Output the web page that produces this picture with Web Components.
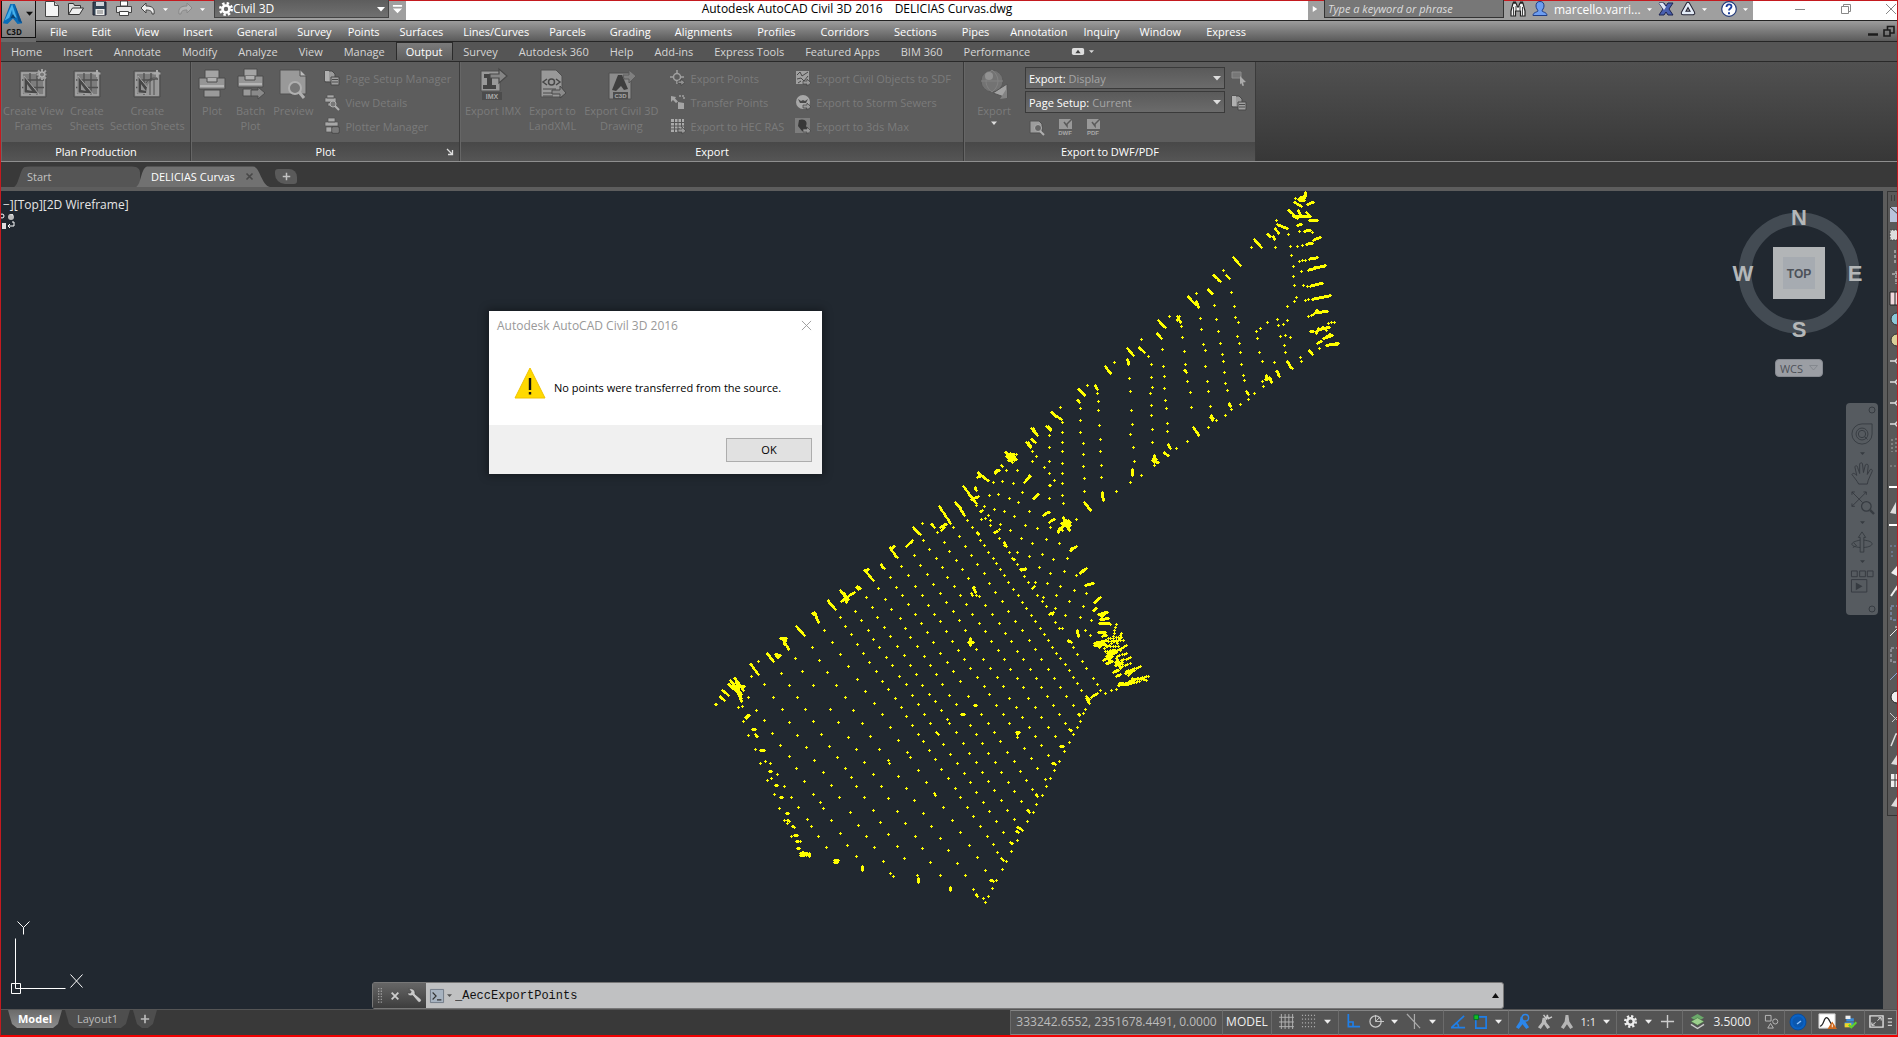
<!DOCTYPE html>
<html lang="en">
<head>
<meta charset="utf-8">
<title>Autodesk AutoCAD Civil 3D 2016</title>
<style>
html,body{margin:0;height:100%}
body{font:11px/15px "Open Sans","Noto Sans",sans-serif;background:#393939;overflow:hidden}
</style>
</head>
<body>
<cad-app></cad-app>
<script>
/* ---------- icon set: [viewBox, markup] ---------- */
const T = (x, y, s, t) => `<text x="${x}" y="${y}" font-family="Liberation Sans,sans-serif" font-weight="700" font-size="${s}" text-anchor="middle" fill="#a8a8a8">${t}</text>`;
const I = {
caret:['0 0 8 8','<path d="M0 2h8L4 6.500z" fill="currentColor"/>'],
logo:['0 0 24 24','<path d="M9 1h5l8 21-5 1-5-6-6 6-5-1z" fill="#0a6cb8"/><path d="M11 1L3 19l5-3 3-9 1 8 4 1z" fill="#45b1ec"/><path d="M9 17l3-5 3 5-3-1z" fill="#08406f"/><path d="M14 2l8 20-4-2z" fill="#0b4f8c"/>'],
new:['0 0 16 16','<path d="M1.500.500h9l4 4v11h-13z" fill="#f4f4f4" stroke="#444"/><path d="M10.500.500v4h4" fill="#ccc" stroke="#444"/>'],
open:['0 0 16 16','<path d="M.500 13.500v-11h5l1 2h6v3" fill="#ddd" stroke="#333"/><path d="M.500 13.500l4-6.500h11l-4 6.500z" fill="#f0f0f0" stroke="#333"/>'],
save:['0 0 16 16','<path d="M1 1h13v13H1z" fill="#345" stroke="#223"/><path d="M4 1h8v4H4z" fill="#cfd4da"/><path d="M3.500 8h9v6h-9z" fill="#eee"/><path d="M5 10h6M5 12h6" stroke="#777"/>'],
print:['0 0 16 16','<path d="M4.500 0h7v5h-7z" fill="#fff" stroke="#444"/><path d="M.500 5.500h15v6H.500z" fill="#e8e8e8" stroke="#444"/><path d="M3.500 10.500h9v4h-9z" fill="#fff" stroke="#444"/>'],
undo:['0 0 16 16','<path d="M1 7l5-5v3c6 0 9 2 8 8h-2c0-3-2-4-6-4v3z" fill="#eee" stroke="#444"/>'],
redo:['0 0 16 16','<path d="M15 7l-5-5v3c-6 0-9 2-8 8h2c0-3 2-4 6-4v3z" fill="#b4b4b4" stroke="#888"/>'],
gear:['0 0 16 16','<circle cx="8" cy="8" r="4" fill="none" stroke="currentColor" stroke-width="3"/><circle cx="8" cy="8" r="6.500" fill="none" stroke="currentColor" stroke-width="3" stroke-dasharray="2.700 2.400"/>'],
bars:['0 0 12 12','<path d="M1 1h10v2H1zM1 5h10L6 10z" fill="#fff"/>'],
play:['0 0 8 10','<path d="M1 1l6 4-6 4z" fill="#fff"/>'],
binoc:['0 0 16 16','<path d="M1 15v-5l2-8h3l1.500 4h1L10 2h3l2 8v5h-4.500v-5h-5v5z" fill="#f2f2f2" stroke="#222" stroke-width="1.200"/><path d="M3 1.500h3M10 1.500h3" stroke="#222" stroke-width="2"/><path d="M3.500 6v9M12.500 6v9M6 5v5M10 5v5" stroke="#444"/>'],
user:['0 0 16 16','<path d="M8 .500c3 0 4 2 4 4.500S10 9 10 10s5 1 5 4.500H1C1 11 6 11 6 10S4 7.500 4 5 5 .500 8 .500z" fill="#6d9df0" stroke="#1d3c86"/>'],
exch:['0 0 16 16','<path d="M1 2h5l2 3 2-3h5l-4 6 4 6h-5l-2-3-2 3H1l4-6z" fill="#4a60b0" stroke="#1c2450"/><path d="M1 2h4l3 4-2 3z" fill="#dfe4f2"/>'],
a360:['0 0 16 16','<path d="M8 3l5 9H3z" fill="none" stroke="#223" stroke-width="4.500" stroke-linejoin="round"/><path d="M8 3l5 9H3z" fill="none" stroke="#e4ecf7" stroke-width="2.500" stroke-linejoin="round"/>'],
help:['0 0 16 16','<circle cx="8" cy="8" r="7.300" fill="#fff" stroke="#223a7a" stroke-width="1.200"/><path d="M5.500 6c0-3.500 5-3.500 5-.500 0 2-2.500 2-2.500 4" fill="none" stroke="#1b3fa0" stroke-width="1.800"/><path d="M7 11.300h2v2H7z" fill="#1b3fa0"/>'],
min:['0 0 12 12','<path d="M1 6.500h10" stroke="currentColor"/>'],
rest:['0 0 12 12','<path d="M1.500 3.500h7v7h-7zM3.500 3V1.500h7v7H9" fill="none" stroke="currentColor"/>'],
x:['0 0 12 12','<path d="M1 1l10 10M11 1L1 11" fill="none" stroke="currentColor"/>'],
boldx:['0 0 12 12','<path d="M2 2l8 8M10 2l-8 8" stroke="currentColor" stroke-width="2.200"/>'],
mmin:['0 0 12 12','<path d="M1 9.500h10" stroke="#1c1c1c" stroke-width="2.500"/>'],
mrest:['0 0 12 12','<path d="M1 5h6v6H1zM4.500 5V1.500h6.500V8H7" fill="none" stroke="#1c1c1c" stroke-width="1.600"/>'],
sheet:['0 0 28 30','<path d="M1 2h26v26H1z" fill="#7d7d7d" stroke="#4b4b4b"/><path d="M3 4h22v22H3z" fill="none" stroke="#a8a8a8" stroke-width="1.500"/><path d="M11 4v22M18 4v22M3 11h22M3 18.500h22" stroke="#4f4f4f" stroke-width="1.300"/><path d="M5 7v17l15 1z" fill="#474747" stroke="#a5a5a5"/><path d="M8 15v6l5 1z" fill="#929292"/>'],
burst:['','<g stroke="#a2a2a2" stroke-width="2"><path d="M23 0v11M17.500 5.500h10M19 1.500l8 8M27 1.500l-8 8"/></g><circle cx="23" cy="5.500" r="2.500" fill="#777" stroke="#bbb"/>'],
star:['','<path d="M24 1v7M20.500 4.500h7" stroke="#aaa" stroke-width="2"/>'],
arc:['','<path d="M13 26c0-12 5-16 12-15v15z" fill="#999"/><path d="M13 14c3-5 8-6 12-4M17 12v14M21 10v16" fill="none" stroke="#4f4f4f"/><path d="M24 1v7M20.500 4.500h7" stroke="#aaa" stroke-width="2"/>'],
plot:['0 0 28 30','<path d="M7 1h14v9H7z" fill="#a4a4a4" stroke="#4c4c4c"/><path d="M1 9h26v11H1z" fill="#959595" stroke="#4c4c4c"/><path d="M9 9v4h10V9" fill="#b0b0b0" stroke="#4c4c4c"/><path d="M2 17h24" stroke="#b5b5b5" stroke-width="2"/><path d="M6 21h16v7H6z" fill="#9a9a9a" stroke="#4c4c4c"/>'],
batch:['0 0 28 30','<path d="M7 0h13v8H7z" fill="#a4a4a4" stroke="#4c4c4c"/><path d="M1 7h25v11H1z" fill="#959595" stroke="#4c4c4c"/><path d="M8 7v4h10V7" fill="#b0b0b0" stroke="#4c4c4c"/><path d="M2 15h23" stroke="#b5b5b5" stroke-width="2"/><path d="M6 20h9v7H6z" fill="#9a9a9a" stroke="#4c4c4c"/><path d="M14 21h7v-3l7 6-7 6v-3h-7z" fill="#8a8a8a" stroke="#4c4c4c"/>'],
preview:['0 0 28 30','<path d="M1 1h20l6 6v18H1z" fill="#999" stroke="#505050"/><path d="M21 1v6h6" fill="#bbb" stroke="#505050"/><circle cx="16" cy="19" r="6" fill="#777" stroke="#b0b0b0" stroke-width="2"/><path d="M20 23l5 6" stroke="#b0b0b0" stroke-width="3"/>'],
imx:['0 0 28 30','<path d="M2 2h19v20H2z" fill="#999" stroke="#505050"/><path d="M5 5h11v4h-3v7h4v4H4v-4h4V9H5z" fill="#444"/><path d="M11 5h9V0l8 7-8 7V9h-9z" fill="#858585" stroke="#484848" stroke-width="1.200"/><path d="M3 23h20v8H3z" fill="#4c4c4c"/>' + T(13, 30, 7, 'IMX')],
xml:['0 0 28 30','<path d="M3 1h15l6 6v21H3z" fill="#999" stroke="#505050"/><path d="M9 10l-4 3 4 3M18 10l4 3-4 3" fill="none" stroke="#484848" stroke-width="1.500"/><circle cx="13.500" cy="13" r="3" fill="none" stroke="#484848" stroke-width="1.500"/><path d="M5 20h13M5 24h12M5 27h10" stroke="#484848"/><path d="M14 21h8v-4l6 7-6 5v-4h-8z" fill="#8a8a8a" stroke="#484848"/>'],
c3d:['0 0 28 30','<path d="M2 4h22v26H2z" fill="#8c8c8c" stroke="#505050"/><path d="M11 6h4l6 14-4 1-3-4-5 5-4-1z" fill="#3e3e3e"/><path d="M16 6h6V1l7 6-7 7v-4h-5z" fill="#808080" stroke="#5a5a5a"/><path d="M6 23h15v7H6z" fill="#4c4c4c"/>' + T(13.5, 29, 6, 'C3D')],
globe:['0 0 28 30','<circle cx="12" cy="12" r="11" fill="#737373" stroke="#5a5a5a"/><path d="M12 1c-8 6-8 16 0 22M12 1c8 6 8 16 0 22M1 12h22" fill="none" stroke="#828282"/><circle cx="9" cy="7" r="4" fill="#929292"/><path d="M13 24L27 15v14z" fill="#a2a2a2" stroke="#555"/><path d="M20 30l7-11v10z" fill="#828282"/>'],
page:['0 0 16 16','<path d="M1 1h7l3 3v8H1z" fill="#9a9a9a" stroke="#494949"/><path d="M1 1h4v10H1z" fill="#b0b0b0"/><path d="M7 7h8v8H7z" fill="#a0a0a0" stroke="#494949"/><path d="M8 9.500h6M8 12h6" stroke="#4c4c4c"/>'],
vdet:['0 0 16 16','<path d="M3 1h7v3H3zM1 4h11v4H1zM4 9h5v3H4z" fill="#a8a8a8" stroke="#555" stroke-width=".700"/><circle cx="9" cy="10" r="3" fill="#777" stroke="#b0b0b0"/><path d="M11 12l4 4" stroke="#b0b0b0" stroke-width="2"/>'],
pman:['0 0 16 16','<path d="M4 0h7v4H4zM1 4h13v4H1zM2 9h6v5H2z" fill="#a8a8a8" stroke="#505050" stroke-width=".700"/><path d="M8 9h7v6H8z" fill="#a0a0a0" stroke="#444"/><path d="M9 11h5M9 13h5" stroke="#555"/>'],
xpt:['0 0 16 16','<circle cx="7" cy="7" r="3.500" fill="none" stroke="#a0a0a0" stroke-width="1.500"/><path d="M7 0v4M7 10v4M0 7h4M10 7h4" stroke="#a0a0a0" stroke-width="1.500"/><path d="M8 11h3v-2l4 3.500-4 3v-2H8z" fill="#909090" stroke="#444" stroke-width=".700"/>'],
tpt:['0 0 16 16','<path d="M1 2l5 1-1 1.500 3 3-2 1.500-3-3L1 8zM8 8l6 1v6H8z" fill="#a5a5a5"/><path d="M9 2h5v3" stroke="#a0a0a0" stroke-dasharray="2 1" fill="none" stroke-width="1.500"/>'],
hec:['0 0 16 16','<path d="M1 1h13v13H1z" fill="#aaa"/><path d="M1 4.500h13M1 8h13M1 11h9M4.500 1v13M8 1v13M11.500 1v8" stroke="#555"/><path d="M8 11h4V9l4 4-4 3v-2H8z" fill="#999" stroke="#444" stroke-width=".700"/>'],
sdf:['0 0 16 16','<path d="M1 1h13v13H1z" fill="#a0a0a0"/><path d="M2 5l3-3 2 4 6-4M2 9l4-1 3 3 4-5M3 13l3-2" fill="none" stroke="#484848"/><path d="M8 11h4V9l4 4-4 3v-2H8z" fill="#999" stroke="#444" stroke-width=".700"/>'],
storm:['0 0 16 16','<circle cx="8" cy="8" r="7" fill="#a8a8a8"/><path d="M3 5l3 2 2-1 2 1 3-2-2 4H5z" fill="#484848"/><path d="M8 11h4V9l4 4-4 3v-2H8z" fill="#999" stroke="#444" stroke-width=".700"/>'],
max:['0 0 16 16','<path d="M0 0h15v15H0z" fill="#7d7d7d"/><path d="M4 2c6-2 9 2 7 6l3 5H7L3 8z" fill="#383838"/><path d="M8 11h4V9l4 4-4 3v-2H8z" fill="#999" stroke="#444" stroke-width=".700"/>'],
sel:['0 0 16 16','<path d="M1 2h9v6H1z" fill="#777" stroke="#8d8d8d"/><path d="M9 6l6 6-3 .500 1 3-1.500.500-1.300-3L9 14.500z" fill="#aaa"/>'],
pprev:['0 0 16 16','<path d="M1 2h9l3 3v9H1z" fill="#9c9c9c" stroke="#505050"/><circle cx="9" cy="9" r="3.500" fill="#666" stroke="#b0b0b0"/><path d="M11 12l4 4" stroke="#b0b0b0" stroke-width="2"/>'],
dwf:['0 0 16 16','<path d="M2 0h13v10H2z" fill="#999"/><path d="M7 3l3 4V5l5-5" fill="none" stroke="#5a5a5a" stroke-width="1.500"/>' + T(8, 16, 6, 'DWF')],
pdf:['0 0 16 16','<path d="M2 0h13v10H2z" fill="#999"/><path d="M7 3l3 4V5l5-5" fill="none" stroke="#5a5a5a" stroke-width="1.500"/>' + T(8, 16, 6, 'PDF')],
launch:['0 0 8 8','<path d="M1 1l5 5M6.500 2v4.500H2" fill="none" stroke="#ddd" stroke-width="1.300"/>'],
plus:['0 0 12 12','<path d="M6 1v10M1 6h10" stroke="currentColor" stroke-width="2"/>'],
toggle:['0 0 16 10','<rect x="1" y="1" width="14" height="8" rx="2" fill="#ddd"/><path d="M5 7l3-4 3 4z" fill="#444"/>'],
wrench:['0 0 16 16','<path d="M2 1l2.500 3-1 1.500L.700 5C1 8 3 9 6 8l6 7c2 1 4-1 3-3L8.500 6.500C9 3 7 0 2 1z" fill="#c9c9c9" stroke="#333" stroke-width=".600"/>'],
grip:['0 0 6 20','<path d="M1.500 1v18M4.500 1v18" stroke="#999" stroke-width="1.500" stroke-dasharray="1.500 1.500"/>'],
prompt:['0 0 16 16','<path d="M.500.500h15v15H.500z" fill="#a7b3c0" stroke="#6d7782"/><path d="M3 4l4 4-4 4M8 12.500h5" fill="none" stroke="#333" stroke-width="1.300"/>'],
warn:['0 0 32 32','<path d="M16 1l15 30H1z" fill="#ffd900" stroke="#f0c400"/><path d="M14.800 11h2.400v12h-2.400zM14.800 25h2.400v2.500h-2.400z" fill="#111"/>'],
grid:['0 0 16 16','<path d="M2.500 0v16M6.500 0v16M10.500 0v16M14.500 0v16M0 3.500h16M0 8.500h16M0 13.500h16" stroke="#ccc" opacity=".8"/>'],
dots:['0 0 16 16','<path d="M1 1.500h15M1 5.500h15M1 9.500h15M1 13.500h15" stroke="#aaa" stroke-width="1.200" stroke-dasharray="1.200 2"/>'],
ortho:['0 0 16 16','<path d="M2.500 0v13.500H15M2.500 8.500h5v5" fill="none" stroke="#1f7fe8" stroke-width="1.800"/>'],
polar:['0 0 16 16','<circle cx="7" cy="8" r="6" fill="none" stroke="#ccc" stroke-width="1.300"/><path d="M7 1v7h9M7 8l5-5" fill="none" stroke="#ccc"/>'],
iso:['0 0 16 16','<path d="M1 0l14 15M9 0v16" stroke="#aaa" stroke-width="1.300"/>'],
otrack:['0 0 16 16','<path d="M0 14.500h15M1 14L14 2M8 14c0-3-1-4-3-4" fill="none" stroke="#1f7fe8" stroke-width="1.800"/>'],
osnap:['0 0 16 16','<path d="M3 3h11v12H3z" fill="none" stroke="#1f7fe8" stroke-width="1.800"/><path d="M1 1h5v5H1z" fill="#13c01d" stroke="#063"/>'],
anno1:['0 0 16 16','<path d="M6 3h4l1 5 4 6-3 2-4-5-4 5-3-2 4-6z" fill="#2b86ea"/><circle cx="11" cy="4" r="3.500" fill="#545454" stroke="#2b86ea" stroke-width="1.500"/>'],
anno2:['0 0 16 16','<path d="M6 4h3l1 5 4 5-3 2-3.500-5L4 16l-3-2 4-5z" fill="#bbb"/><path d="M7 1l3 4 1-4 1 4 4-2" stroke="#ccc" fill="none" stroke-width="1.500"/>'],
anno3:['0 0 16 16','<path d="M7 1h3l1 7 4 6-3 2-3.500-5L5 16l-3-2 4-6z" fill="#b5b5b5"/>'],
cplus:['0 0 16 16','<path d="M8 1v14M1 8h14" stroke="#ccc" stroke-width="1.500"/>'],
layers:['0 0 16 16','<path d="M8 0l7 4-7 4-7-4z" fill="#6aa86a"/><path d="M8 4l7 4-7 4-7-4z" fill="#9ccf8c" stroke="#3f6b3c" stroke-width=".600"/><path d="M1 11l7 4.500 7-4.500" fill="none" stroke="#ccc" stroke-width="1.500"/>'],
shapes:['0 0 16 16','<path d="M1.500 1.500h6v6h-6z" fill="none" stroke="#bbb"/><circle cx="12" cy="8" r="2.700" fill="none" stroke="#bbb"/><path d="M7 10l3 5H4z" fill="none" stroke="#bbb"/>'],
perf:['0 0 18 18','<circle cx="9" cy="9" r="8" fill="#0b62c4" stroke="#0a4d9b"/><circle cx="9" cy="9" r="5.500" fill="#0b57ae"/><path d="M8 11l4-3" stroke="#8cc3ff" stroke-width="1.500"/>'],
curve:['0 0 20 18','<path d="M1 1h17v15H1z" fill="#fff" stroke="#ccc"/><path d="M2 14c4 0 4-9 7-9s3 6 7 9" fill="none" stroke="#222" stroke-width="1.300"/><path d="M15 9l5 8H10z" fill="#d26a1d"/><path d="M14.500 12h1v3h-1z" fill="#fff"/>'],
tray:['0 0 16 18','<path d="M3 5h9v4H3zM1 10h11v5H1z" fill="#3c8bd6"/><path d="M1 11h8v5H1z" fill="#f0d52a"/><path d="M2 2h6v4H2z" fill="#eee"/><path d="M6 13l3 3 6-6" fill="none" stroke="#5fd22a" stroke-width="2.500"/>'],
clean:['0 0 16 14','<path d="M1 1h14v12H1z" fill="none" stroke="#ddd" stroke-width="1.500"/><path d="M9 6l4-3.500M10 3h3v3M7 8l-4 3M3 8v3h3" stroke="#ddd" fill="none"/>'],
menu3:['0 0 6 12','<path d="M1 2h5M1 6h5M1 10h5" stroke="#ccc" stroke-width="1.500"/>'],
wheel:['0 0 24 24','<path d="M12 1h11v11a11 11 0 1 1-11-11z" fill="none" stroke="currentColor"/><circle cx="12" cy="12" r="6.500" fill="none" stroke="currentColor"/><circle cx="12" cy="12" r="4" fill="none" stroke="currentColor"/><path d="M15 15l3 3" stroke="currentColor"/>'],
hand:['0 0 24 24','<path d="M8 23C6 19 3 16 1 13c1-2 3-1 5 1L4 5c1-2 3-1 3 1l2 6V2c1-2 3-1 3 0l1 9 2-8c1-1 3-1 3 1l-1 9 3-5c1-1 3 0 2 2l-4 9-1 4z" fill="none" stroke="currentColor"/>'],
zoom:['0 0 24 24','<circle cx="16" cy="16" r="5" fill="none" stroke="currentColor" stroke-width="1.300"/><path d="M20 20l4 4" stroke="currentColor" stroke-width="2.500"/><path d="M1 1l11 11M16 1L1 16M1 4V1h3M13 1h3v3M1 13v3h3" stroke="currentColor" fill="none"/>'],
orbit:['0 0 24 24','<path d="M10 23V7H8l4-6 4 6h-2v16z" fill="none" stroke="currentColor"/><path d="M10 10c-12 2-12 7 0 8M14 10c12 1 12 7 0 8M3 13l3 3-4 2" fill="none" stroke="currentColor"/>'],
motion:['0 0 24 24','<path d="M.500 1h6v6h-6zM9 1h6v6H9zM17 1h6v6h-6zM.500 10h16v13H.500z" fill="none" stroke="currentColor"/><path d="M5 13l7 4-7 4z" fill="currentColor"/>'],
};
const ico = (n, w = 16, h = w, cls = '') =>
  `<svg class="i ${cls}" width="${w}" height="${h}" viewBox="${I[n][0]}" aria-hidden="true">${I[n][1]}</svg>`;
const BASE = `:host,*{box-sizing:border-box}button,input,select{font:inherit;color:inherit;background:none;border:0;padding:0;margin:0;outline:0}
button{display:flex;align-items:center;justify-content:center;white-space:nowrap}.i{display:block;flex:none;overflow:visible}`;
const define = (name, css, html) => customElements.define(name, class extends HTMLElement {
  connectedCallback() {
    if (this.shadowRoot) return;
    this.attachShadow({mode: 'open'}).innerHTML = `<style>${BASE}${css}</style>` + (typeof html === 'function' ? html(this) : html);
  }
});

/* ---------- title bar ---------- */
const qbtn = (n, label, w = 16) => `<button aria-label="${label}">${ico(n, w)}</button>`;
define('title-bar', `
:host{display:flex;height:20px;background:#fff;border-bottom:1px solid #222}
.q,.r{display:flex;align-items:center;background:#9f9f9f;color:#fff;flex:none;padding-bottom:3px}
.q{padding-left:8px;gap:8px;width:370px}.q .c{margin:0 1px 0 -1px}
.ws{display:flex;align-items:center;flex:1;height:18px;background:linear-gradient(#5d5d5d,#707070);border:1px solid #444;border-top:0;padding:0 3px 0 4px;font-size:12px;margin-right:-5px}
.ws select{flex:1;appearance:none}
.t{flex:1;display:flex;justify-content:center;gap:12px;align-items:center;color:#000;font-size:12px;padding-bottom:4px}
.r{width:445px;gap:6px;padding-left:4px}.r .z{margin-left:8px}
.r input{width:180px;height:18px;background:#777;border:1px solid #333;border-top:0;padding:0 3px;font-style:italic}
.r input::placeholder{color:#ddd}.w{flex:none;display:flex;width:144px;color:#888;align-items:center;justify-content:space-between;padding:0 0 4px 41px}
`, `<div class="q">${qbtn('new','New')}${qbtn('open','Open')}${qbtn('save','Save')}${qbtn('print','Plot')}${qbtn('undo','Undo')}
<button class="c" aria-label="Undo list">${ico('caret',5)}</button>${qbtn('redo','Redo')}<button class="c" aria-label="Redo list">${ico('caret',5)}</button>
<label class="ws">${ico('gear',14)}<select aria-label="Workspace"><option>Civil 3D</option></select>${ico('caret',8)}</label><button aria-label="Customize" style="padding-right:3px">${ico('bars',11)}</button></div>
<div class="t"><span>Autodesk AutoCAD Civil 3D 2016</span><span>DELICIAS Curvas.dwg</span></div>
<div class="r">${ico('play',6,10)}<input aria-label="Search" placeholder="Type a keyword or phrase">${qbtn('binoc','Search')}${qbtn('user','Account')}<button style="font-size:12px">marcello.varri...</button>${ico('caret',5)}${qbtn('exch','Exchange')}${qbtn('a360','A360')}${ico('caret',5)}<button class="z" aria-label="Help">${ico('help',16)}</button>${ico('caret',5)}</div>
<div class="w">${qbtn('min','Minimize',12)}${qbtn('rest','Restore',12)}${qbtn('x','Close',12)}</div>`);

/* ---------- classic menu bar ---------- */
const MENUS = 'File Edit View Insert General Survey* Points* Surfaces Lines/Curves* Parcels Grading Alignments+ Profiles+ Corridors+ Sections+ Pipes+ Annotation* Inquiry* Window+ Express+'.split(' ');
define('menu-bar', `
:host{display:flex;height:21px;align-items:center;background:linear-gradient(#9c9c9c,#5a5a5a);border-bottom:1px solid #262626;color:#fff;padding-left:2px}
button{padding:0 12px}button.s{padding:0 8px}button.l{padding:0 13px 0 12px}.g{flex:1}button.w{padding:0 2px}`,
  MENUS.map(m => `<button class="${m.endsWith('*') ? 's' : m.endsWith('+') ? 'l' : ''}">${m.replace(/[*+]/, '')}</button>`).join('') +
  `<span class="g"></span><button class="w" aria-label="Minimize drawing">${ico('mmin',12)}</button><button class="w" aria-label="Restore drawing">${ico('mrest',12)}</button>`);

/* ---------- ribbon tabs ---------- */
define('ribbon-tabs', `
:host{display:flex;height:20px;background:#555;border-bottom:1px solid #2a2a2a;color:#d5d5d5;padding:1px 0 0 -1px}
button{padding:0 10px 1px 9px;border:1px solid transparent;border-bottom:0;height:18px;margin-left:0}
button:first-child{padding-left:6px}
.on{background:linear-gradient(#7b7b7b,#5f5f5f);color:#fff;border-color:#2b2b2b}.e{gap:4px;margin-left:20px}`,
  'Home,Insert,Annotate,Modify,Analyze,View,Manage,Output,Survey,Autodesk 360,Help,Add-ins,Express Tools,Featured Apps,BIM 360,Performance'.split(',')
    .map(t => `<button class="${t === 'Output' ? 'on' : ''}">${t}</button>`).join('') +
  `<button class="e" aria-label="Minimize ribbon">${ico('toggle',14,9)}${ico('caret',5)}</button>`);

/* ---------- ribbon ---------- */
define('big-tool', `
:host{display:block}button{flex-direction:column;justify-content:flex-start;color:#7b7b7b;white-space:pre;gap:4px;line-height:15px}`,
  el => { const n = el.getAttribute('icon'); const extra = el.getAttribute('mark');
    const svg = `<svg class="i" width="28" height="30" viewBox="0 0 28 30" aria-hidden="true">${I[n][1]}${extra ? I[extra][1] : ''}</svg>`;
    return `<button>${svg}<span><slot></slot></span></button>`; });
define('row-tool', `:host{display:block}button{gap:5px;color:#7b7b7b;height:24px}`,
  el => `<button>${ico(el.getAttribute('icon'),16)}<slot></slot></button>`);
define('ribbon-panel', `
:host{display:flex;flex-direction:column;background:#5d5d5d;border-right:1px solid #3b3b3b;border-left:1px solid #666}
.b{flex:1;display:flex;align-items:flex-start;padding:7px 4px 0;gap:var(--gap,6px)}
.t{height:19px;display:flex;align-items:center;justify-content:center;background:linear-gradient(#484848,#555);color:#fff;position:relative}
.t .i{position:absolute;right:5px;top:6px}`,
  el => `<div class="b"><slot></slot></div><div class="t">${el.getAttribute('label')}${el.hasAttribute('launcher') ? ico('launch',8) : ''}</div>`);
define('field-combo', `
:host{display:block}label{display:flex;align-items:center;gap:3px;height:22px;border:1px solid #3a3a3a;background:linear-gradient(#5a5a5a,#6b6b6b);padding:0 3px;color:#fff}
select{appearance:none;flex:1;color:#a5a5a5}.i{color:#ddd}`,
  el => `<label>${el.getAttribute('label')}<select><option>${el.getAttribute('value')}</option></select>${ico('caret',8)}</label>`);
define('ribbon-bar', `
:host{display:flex;height:100px;background:linear-gradient(#515151,#373737);border-bottom:1px solid #8f8f8f}
.col{display:flex;flex-direction:column;margin:-3px 0 0 3px}.a{width:190px}.p{width:269px}.e{width:504px}.d{width:292px}
.p,.e{--gap:8px}.f{display:flex;flex-direction:column;gap:2px;width:200px;margin-top:-2px}.m{display:flex;gap:12px;padding:4px}
.s{display:flex;flex-direction:column;gap:9px;margin-top:1px}`,
`<ribbon-panel class="a" label="Plan Production"><big-tool icon="sheet" mark="burst" style="margin-left:-3px">Create View<br>Frames</big-tool><big-tool icon="sheet" mark="star">Create<br>Sheets</big-tool><big-tool icon="sheet" mark="arc">Create<br>Section Sheets</big-tool></ribbon-panel>
<ribbon-panel class="p" label="Plot" launcher><big-tool icon="plot" style="margin:0 2px">Plot</big-tool><big-tool icon="batch">Batch<br>Plot</big-tool><big-tool icon="preview">Preview</big-tool>
<div class="col"><row-tool icon="page">Page Setup Manager</row-tool><row-tool icon="vdet">View Details</row-tool><row-tool icon="pman">Plotter Manager</row-tool></div></ribbon-panel>
<ribbon-panel class="e" label="Export"><big-tool icon="imx">Export IMX</big-tool><big-tool icon="xml">Export to<br>LandXML</big-tool><big-tool icon="c3d">Export Civil 3D<br>Drawing</big-tool>
<div class="col"><row-tool icon="xpt">Export Points</row-tool><row-tool icon="tpt">Transfer Points</row-tool><row-tool icon="hec">Export to HEC RAS</row-tool></div>
<div class="col"><row-tool icon="sdf">Export Civil Objects to SDF</row-tool><row-tool icon="storm">Export to Storm Sewers</row-tool><row-tool icon="max">Export to 3ds Max</row-tool></div></ribbon-panel>
<ribbon-panel class="d" label="Export to DWF/PDF"><big-tool icon="globe" style="width:50px;display:grid;justify-content:center">Export<br><svg width="6" height="6" viewBox="0 0 8 8" style="color:#ddd;display:block;margin:2px auto">${I.caret[1]}</svg></big-tool>
<div class="f"><field-combo label="Export:" value="Display"></field-combo><field-combo label="Page Setup:" value="Current"></field-combo><div class="m">${ico('pprev',16)}${ico('dwf',16)}${ico('pdf',16)}</div></div>
<div class="s">${ico('sel',16)}${ico('page',16)}</div></ribbon-panel>`);

/* ---------- file tabs ---------- */
define('file-tabs', `
:host{display:flex;height:29px;background:#393939;border-bottom:4px solid #5d5d5d;padding:4px 0 0 13px;align-items:stretch}
button{position:relative;justify-content:flex-start;color:#c2c2c2}
button>svg.s{position:absolute;inset:0;width:100%;height:100%}span,.i{position:relative}
.st{width:126px;padding-left:13px}.dl{width:134px;padding-left:15px;margin-left:-4px;color:#fff;gap:10px}.dl .i{color:#484848}
.pl{width:22px;height:15px;align-self:center;margin-left:5px;background:#5a5a5a;border-radius:3px 8px 3px 10px;justify-content:center}`,
`<button class="st"><svg class="s" viewBox="0 0 126 21" preserveAspectRatio="none"><path d="M0 21c5-2 6-19 11-20Q12 .500 16 .500h102c6 0 8 3 8 6v14.500z" fill="#555"/></svg><span>Start</span></button>
<button class="dl"><svg class="s" viewBox="0 0 134 21" preserveAspectRatio="none"><path d="M0 21C5 19 5 2 11 .500h106c7 0 8 18 17 20.500z" fill="#717171"/></svg><span>DELICIAS Curvas</span>${ico('boldx',9)}</button>
<button class="pl" aria-label="New drawing">${ico('plus',9)}</button>`);

/* ---------- survey point cloud; every coordinate is in thirds of a pixel ---------- */
const UP = {o:[1050,190], p:`-53,784 -53,814 -41,799 -2,736 -2,814 0,886 37,697 37,727 37,757 37,784 37,820 37,850 37,880 37,916 40,940 91,655 91,691 91,727 100,760 100,793 100,829 103,865 103,904 142,610 145,634 145,661 148,706 151,748 151,784 154,826 154,862 238,565 241,604 244,661 247,703 241,733 250,772 253,814 241,877 274,856 199,904 295,499 304,523 304,562 307,592 301,610 304,646 304,676 307,718 307,757 337,478 340,529 343,559 343,595 346,631 349,655 352,700 352,724 394,409 397,442 403,484 406,523 412,574 421,607 424,652 451,385 454,418 460,463 466,481 466,529 472,574 475,604 481,649 493,346 499,388 505,424 511,460 517,493 520,514 523,547 526,580 532,601 544,307 553,349 556,382 565,397 562,439 568,460 571,487 574,523 580,556 583,571 619,424 631,415 652,397 622,445 628,487 637,514 673,517 682,388 685,406 700,403 712,391 691,439 706,436 721,442 703,466 706,487 712,349 733,334 739,322 733,286 730,259 730,229 724,196 721,169 742,169 757,166 715,133 676,172 604,172 358,379 439,310 520,241 274,448 193,517 112,586 31,652 79,988 379,775 412,754 475,712 499,691 526,676 544,658 571,643 595,628 613,610 640,589 637,574 751,502 754,514 808,475 313,826 679,91 736,26 787,127 748,124 775,380 784,376 754,244 766,331 775,329 760,286 772,289 748,214 757,211 766,210 844,398 853,397 835,401`,
s:`-55,716,-38,735 -50,716,-42,730 -55,747,-45,757 -70,758,-60,771 -66,758,-58,768 -10,710,0,720 -6,710,2,718 4,668,34,688 8,668,16,678 82,630,88,638 86,597,104,617 136,586,142,598 165,528,182,551 231,474,249,496 233,508,236,524 267,473,284,487 326,392,345,413 322,430,334,446 383,380,392,398 387,378,381,390 414,320,436,344 438,334,446,352 474,299,488,311 491,255,511,275 530,256,538,266 551,203,571,227 613,149,634,171 652,132,660,140 670,140,673,148 676,116,686,130 681,103,711,116 716,60,742,86 730,80,782,78 745,62,752,76 768,66,780,80 745,27,766,18 748,30,764,30 767,8,764,24 733,36,754,48 772,44,790,36 778,90,802,90 742,106,754,103 763,124,782,120 790,151,811,142 769,163,787,159 778,207,802,203 775,240,826,227 792,234,824,229 781,288,818,280 787,328,841,317 790,374,802,360 798,367,832,365 781,424,790,424 798,430,806,415 806,420,838,411 818,412,829,420 820,446,846,436 830,440,840,432 802,459,814,454 829,466,865,460 844,464,862,463 778,481,787,493 712,514,726,536 680,543,688,560 646,568,662,564 648,556,652,568 658,562,664,578 588,603,594,614 537,640,541,650 481,682,490,684 484,676,487,690 430,711,446,736 342,788,354,797 354,762,360,776 308,812,324,818 313,796,313,818 310,806,318,808 247,838,247,856 156,908,160,932 102,936,122,962 24,1026,48,1000 40,982,52,1012 36,1000,62,996 46,990,58,1020 28,1016,38,1020 0,994,12,988 403,540,409,548`};
const LO = {o:[700,440], p:`421,532 436,559 454,583 472,613 490,640 508,667 530,694 547,724 565,748 586,775 604,802 619,829 637,856 655,883 670,904 688,931 706,958 724,988 745,1016 766,1045 781,1072 802,1102 820,1129 841,1159 862,1189 880,1213 892,1237 907,1258 466,514 484,541 505,571 520,598 538,622 559,652 577,676 598,709 619,733 637,766 655,793 673,823 691,850 712,880 730,913 751,943 772,970 793,1000 811,1027 829,1057 850,1087 868,1114 889,1144 910,1177 499,472 517,502 532,532 553,562 571,589 592,619 613,646 631,676 649,703 667,736 688,763 706,784 724,811 742,838 748,850 769,877 790,910 808,940 829,967 847,997 865,1024 883,1051 904,1081 922,1111 943,1138 535,445 556,478 574,508 601,535 616,565 631,592 652,619 673,649 691,676 709,703 727,733 748,766 769,793 787,823 811,856 829,883 847,910 865,940 886,967 904,997 925,1027 943,1054 964,1084 982,1111 571,412 589,442 607,466 625,493 646,523 664,550 682,577 700,607 721,640 742,667 760,694 781,724 805,769 826,796 844,823 865,850 883,877 901,904 922,937 943,964 961,994 979,1021 997,1048 604,379 625,406 646,439 667,466 685,496 703,523 721,544 739,574 757,604 775,631 793,658 811,685 832,712 853,739 868,763 889,796 910,823 928,850 952,877 973,925 994,955 1012,985 1036,1018 643,346 661,376 682,403 700,433 721,460 739,487 760,514 778,541 796,571 829,628 850,658 871,685 892,712 910,739 928,775 949,802 967,832 988,862 1006,889 1024,916 1045,946 1063,970 670,301 688,328 709,355 727,382 742,412 763,439 781,466 799,493 817,523 838,550 856,574 874,604 895,631 913,658 931,688 952,715 970,742 985,775 1006,802 1024,832 1045,862 1066,889 1090,919 712,277 733,307 748,334 769,361 787,388 805,415 823,442 838,469 856,496 877,523 898,550 916,580 934,604 952,634 970,658 991,688 1009,715 1024,742 1042,769 1060,796 1078,823 1096,850 1114,871 760,262 778,289 796,319 814,346 832,373 853,400 868,430 886,457 907,484 925,514 946,544 967,571 988,601 1006,628 1024,658 1045,688 1063,715 1081,742 1099,769 1120,796 1138,823 802,241 817,262 833,280 841,301 853,316 865,337 880,355 889,370 901,388 913,406 925,427 940,448 955,466 967,487 979,505 994,526 1006,544 1021,565 1033,583 1045,601 1057,622 1069,640 1081,655 1096,673 1108,691 1120,712 1132,730 1144,751 1160,775 830,196 845,214 845,238 857,236 871,241 871,256 886,277 898,268 898,295 913,316 928,337 940,358 952,373 964,391 973,409 985,427 1000,442 1012,466 1027,484 1039,499 1051,520 1066,547 1078,565 1087,566 1108,604 1120,622 1132,643 1147,664 1159,685 1180,715 1192,733 853,199 865,226 868,166 883,208 913,214 895,163 907,124 880,127 919,91 952,91 940,130 967,157 955,187 928,175 943,229 901,253 931,271 964,295 997,310 976,256 988,214 1012,265 1039,298 1051,262 952,337 988,349 1027,343 1018,382 1060,358 1102,355 1078,310 976,385 1006,427 1051,400 1093,394 1129,406 1042,430 1081,439 1123,451 1159,460 1030,472 1069,466 1108,484 1150,499 1066,505 1096,526 1141,532 1174,541 1057,523 1156,571 1171,586 1048,22 1048,100 1033,82 1009,49 997,34 997,64 988,106 1063,121 1048,136 1047,175 1090,190 1129,238 373,571 397,607 421,643 445,679 472,718 496,754 523,790 547,823 571,862 595,901 622,937 631,952 655,991 679,1027 703,1060 706,1066 730,1102 757,1141 781,1177 808,1216 832,1252 856,1291 877,1321 337,622 358,661 382,697 409,736 436,772 460,811 487,850 511,889 538,928 565,962 568,970 595,1009 619,1045 643,1081 670,1120 694,1159 721,1195 745,1231 772,1270 796,1306 820,1348 286,655 307,694 340,736 391,808 415,847 445,892 469,928 493,967 520,1003 544,1039 565,1075 592,1114 616,1150 646,1189 667,1225 691,1267 721,1306 245,700 268,736 292,772 316,808 340,844 364,883 388,919 412,952 436,985 454,1012 469,1039 493,1072 520,1111 541,1147 565,1183 592,1219 613,1255 652,1306 193,733 220,772 247,808 268,847 292,886 319,922 343,961 370,997 394,1036 418,1072 451,1117 475,1156 499,1189 523,1222 550,1264 571,1300 580,1309 145,772 169,811 193,841 217,880 241,916 268,949 289,985 313,1024 340,1063 361,1087 370,1105 394,1141 421,1180 442,1216 469,1249 196,964 232,1003 253,1039 274,1072 295,1102 322,1138 334,1159 355,1189 379,1222 115,802 127,800 130,844 145,886 166,928 181,970 202,1021 223,1063 238,1105 253,1141 262,1150 274,1189 214,1015 212,970 1150,820 1156,808 1141,844 1132,862 1120,883 1108,907 1093,934 1078,964 1063,991 1051,1015 1039,1039 1027,1066 1009,1066 1009,1093 1000,1117 985,1114 982,1144 967,1171 952,1201 934,1234 919,1264 907,1288 889,1321 877,1345 865,1369 856,1387 850,1375 815,460 828,466 816,466 154,709 175,664 667,250 952,892 1216,760 1234,751 1249,748 1192,760 1201,750`,
s:`982,10,992,20 916,36,934,54 926,44,948,44 926,62,946,56 930,40,944,62 920,50,938,66 940,46,948,58 885,94,897,92 886,100,892,90 904,76,908,80 834,98,864,122 832,112,840,108 790,138,828,190 815,178,834,170 825,142,828,150 766,188,782,206 782,208,792,226 717,198,751,249 722,262,740,252 724,270,734,262 694,252,702,262 640,263,660,284 620,318,638,302 570,323,591,353 574,326,584,318 544,374,552,386 494,390,520,422 496,392,506,388 468,442,480,444 472,438,474,448 420,450,445,478 424,484,462,458 432,460,440,486 384,482,405,508 336,520,344,524 344,518,356,548 288,558,312,585 242,596,256,596 250,600,266,628 252,612,260,594 202,640,220,664 226,644,240,646 230,650,236,652 152,672,174,702 46,794,50,794 60,770,72,780 66,750,86,766 85,732,102,748 92,722,124,762 104,714,130,750 98,740,134,740 106,746,124,776 116,750,124,784 110,728,120,768 136,832,149,825 140,836,144,830 158,868,166,868 166,884,172,890 182,930,194,930 208,994,214,993 226,1036,232,1036 240,1073,247,1073 258,1121,266,1121 262,1141,268,1143 276,1160,284,1161 284,1186,292,1187 290,1205,300,1205 292,1224,298,1224 302,1240,322,1240 302,1246,318,1246 308,1236,316,1244 328,1240,329,1248 402,1262,414,1262 404,1266,412,1268 487,1278,487,1290 655,1316,656,1328 750,1342,752,1352 828,1362,832,1368 1135,822,1138,826 1108,868,1114,872 1058,970,1066,972 1082,919,1090,919 1008,1062,1012,1068 982,1111,988,1116 952,1162,964,1168 948,1174,956,1176 930,1208,938,1210 872,1320,880,1324 904,1255,910,1262 950,876,958,878 952,882,956,876 806,608,820,608 811,594,812,616 784,823,792,823 822,796,830,796 1160,770,1168,790 1162,782,1168,778 1174,772,1188,762 974,126,990,108 1000,176,1014,162 1030,226,1048,216 1048,246,1062,238 1074,274,1096,254 1090,234,1098,254 1084,250,1110,256 1098,240,1108,270 1104,240,1110,256 1112,332,1128,320 1114,326,1126,322 1140,400,1160,386 1144,396,1156,388 1156,436,1180,430 1182,488,1200,472 1186,486,1194,478 1180,512,1188,504 1196,524,1222,516 1202,538,1226,536 1198,550,1232,552 1204,530,1214,520 1196,576,1216,578 1206,588,1218,586 1184,610,1220,602 1184,616,1216,614 1198,622,1210,606 1212,626,1250,600@9 1216,634,1260,630@7 1222,620,1256,618@9 1218,650,1250,636 1222,640,1244,630 1210,660,1236,650 1218,670,1236,664 1226,670,1232,650 1248,552,1240,600@9 1264,580,1252,610@9 1224,596,1264,592@8 1226,604,1270,602@8 1258,628,1280,616@7 1252,648,1280,640@7 1246,666,1268,672 1246,676,1268,668 1252,660,1262,684 1250,656,1258,672 1264,662,1292,652@7 1268,680,1290,670@7 1240,696,1256,690 1248,710,1262,704 1280,694,1320,680@6 1276,700,1304,690 1286,706,1300,690 1256,736,1290,728 1258,730,1284,734 1284,726,1316,714@5 1290,730,1318,724@5 1320,714,1346,708@7 1318,718,1340,720@6 1296,716,1302,728 1048,522,1060,518 996,446,1004,440 1132,570,1135,590 1104,602,1114,606 962,388,976,388 936,356,944,358 842,214,848,212 882,278,892,274 912,308,918,318 832,276,836,284 820,442,826,458 708,876,716,884`};
/* The drawing area starts 1px in and 191px down from the window corner. */
const pts = ({o, p, s}) => {
  const out = new Set(), add = (x, y) => out.add(`${Math.floor(x / 3) + o[0] - 1},${Math.floor(y / 3) + o[1] - 191}`);
  p.trim().split(/\s+/).forEach(v => add(...v.split(',').map(Number)));
  s.trim().split(/\s+/).forEach(v => {
    const [c, st] = v.split('@'), [a, b, d, e] = c.split(',').map(Number);
    const n = Math.max(1, Math.round(Math.hypot(d - a, e - b) / (st || 3)));
    for (let k = 0; k <= n; k++) add(a + (d - a) * k / n, b + (e - b) * k / n);
  });
  return [...out].map(v => { const [x, y] = v.split(',').map(Number); return `M${x - 1} ${y}h3v1h-3zM${x} ${y - 1}h1v3h-1z`; }).join('');
};
define('survey-points', `:host{position:absolute;inset:0;overflow:hidden}svg{display:block;width:100%;height:100%}`,
  () => `<svg shape-rendering="crispEdges" aria-hidden="true"><path fill="#ff0" d="${pts(UP)}"/><path fill="#ff0" d="${pts(LO)}"/></svg>`);

/* ---------- drawing-area overlays ---------- */
define('ucs-icon', `:host{position:absolute;left:9px;bottom:14px}`,
`<svg class="i" width="76" height="76" viewBox="0 0 76 76" fill="none" stroke="#fff" aria-label="UCS axes"><path d="M1.500 64.500h9v10h-9zM5.500 69.500v-50M5.500 69.500h50M60.500 55.500l12 13M72.500 55.500l-12 13M7.500 2.500l6 6 6-6M13.500 8.500v7"/></svg>`);
define('view-cube', `:host{position:absolute;right:16px;top:16px;width:136px;display:flex;flex-direction:column;align-items:center;gap:24px}
svg text{font-family:"Liberation Sans",sans-serif;font-weight:700;text-anchor:middle;fill:#b4b7b8}
button{width:48px;height:18px;background:#9b9ea4;border:1px solid #868a91;border-radius:4px;color:#4d5158;gap:6px}`,
`<svg class="i" width="136" height="128" viewBox="0 0 136 128"><circle cx="68" cy="66" r="54" fill="none" stroke="#434b53" stroke-width="13"/>
<path d="M42 40h52v52H42z" fill="#b2b5b7"/><path d="M52 50h32v32H52z" fill="#a6abb1"/>
<text x="68" y="71" font-size="12" style="fill:#4d525a">TOP</text><text x="68" y="18" font-size="22">N</text><text x="68" y="130" font-size="22">S</text><text x="12" y="74" font-size="22">W</text><text x="124" y="74" font-size="22">E</text></svg>
<button>WCS <svg class="i" width="9" height="6" viewBox="0 0 9 6"><path d="M.500.500h8L4.500 5z" fill="none" stroke="#85898f"/></svg></button>`);
define('nav-bar', `:host{position:absolute;right:5px;top:212px;width:32px;height:212px;background:#565b60;border-radius:4px;color:#363b41;display:flex;flex-direction:column;align-items:center;padding:3px 2px;gap:6px}
.e{align-self:flex-end}.g{flex:1}`,
`<svg class="i e" width="8" height="8"><circle cx="4" cy="4" r="3" fill="none" stroke="currentColor"/></svg><button aria-label="Wheel" style="margin-top:3px">${ico('wheel',22)}</button>${ico('caret',5)}<button aria-label="Pan">${ico('hand',23)}</button><button aria-label="Zoom">${ico('zoom',23)}</button>${ico('caret',5)}<button aria-label="Orbit">${ico('orbit',22)}</button>${ico('caret',5)}<button aria-label="ShowMotion">${ico('motion',23)}</button><span class="g"></span><svg class="i e" width="8" height="8"><circle cx="4" cy="4" r="3" fill="none" stroke="currentColor"/></svg>`);
define('message-box', `:host{position:absolute;left:488px;top:120px;width:333px;background:#fff;color:#000;box-shadow:0 0 8px 2px rgba(0,0,0,.35);display:block}
header{display:flex;justify-content:space-between;align-items:center;height:29px;padding:0 10px 0 8px;color:#999;font-size:12px}
.m{display:flex;align-items:center;height:85px;padding:0 24px 0 25px;gap:8px}
p{margin:10px 0 0}footer{background:#f0f0f0;display:flex;justify-content:flex-end;padding:13px 10px 12px}
footer button{width:86px;height:24px;background:#e1e1e1;border:1px solid #adadad;padding-bottom:1px}`,
`<header><span>Autodesk AutoCAD Civil 3D 2016</span><button aria-label="Close">${ico('x',11)}</button></header><div class="m">${ico('warn',32)}<p>No points were transferred from the source.</p></div><footer><button>OK</button></footer>`);
define('command-line', `:host{position:absolute;left:371px;right:379px;bottom:0;height:27px;display:flex;background:#c0c1c2;border:1px solid #777;border-radius:3px;color:#000}
.h{width:53px;background:linear-gradient(#666,#3d3d3d);display:flex;align-items:center;justify-content:space-between;color:#ccc;padding:0 4px}
label{flex:1;display:flex;align-items:center;gap:3px;padding:0 4px;color:#555}input{flex:1;color:#111;font:12px "Liberation Mono",monospace}`,
`<div class="h">${ico('grip',6,18)}${ico('boldx',10)}${ico('wrench',15)}</div><label>${ico('prompt',14)}${ico('caret',5)}<input aria-label="Command" value="_AeccExportPoints"><svg class="i" width="7" height="5"><path d="M0 5h7L3.500 0z" fill="#111"/></svg></label>`);
define('drawing-area', `:host{position:relative;flex:1;background:#212830;color:#e6e6e6;overflow:hidden}
.v{margin:6px 0 0 2px;font-size:12px}.c{margin-left:1px}`,
`<div class="v">−][Top][2D Wireframe]</div><svg class="i c" width="14" height="18" viewBox="0 0 14 18"><g fill="none" stroke="#fff"><circle cx="0" cy="4" r="2"/><path d="M6 14h6v-4h-2M8 12l-2 2 2 2"/></g><circle cx="9" cy="5" r="3" fill="#bbb"/><path d="M0 11h4v6H0zM7 2h4v2z" fill="#ddd"/></svg>
<survey-points></survey-points><ucs-icon></ucs-icon><view-cube></view-cube><nav-bar></nav-bar><message-box></message-box><command-line></command-line>`);

/* ---------- docked tool strip, clipped by the window edge ---------- */
const clip = [
 '<path d="M1 1h9v15H1z" fill="#b9c4dc"/><path d="M1 1l9 8" stroke="#333"/>','<path d="M1 3h8v10H1z" fill="#ddd" stroke="#444" stroke-dasharray="2 1"/>',
 '<path d="M6 2v14M9 1v15" stroke="#ddd" stroke-dasharray="3 2"/>','<path d="M3 5h6M7 2v13" stroke="#ddd" stroke-dasharray="3 1"/>','<path d="M1 2h9v13H1z" fill="#eed9dc" stroke="#222"/><path d="M6 2v13" stroke="#222"/>',
 '<circle cx="8" cy="8" r="6" fill="#8cc8d8" stroke="#333"/>','<circle cx="8" cy="8" r="6" fill="#d8d09a" stroke="#333"/>',
 ...Array(4).fill('<path d="M1 8h5l4-4M6 8l4 4" stroke="#ddd" fill="none" stroke-width="1.500"/>'),
 '<path d="M3 2v13M7 1v15" stroke="#aaa" stroke-dasharray="2 2"/>','<path d="M1 8h9" stroke="#999" stroke-dasharray="2 2"/>','<path d="M0 8h10" stroke="#fff" stroke-width="2"/>','<path d="M1 13l6-11v12z" fill="#ddd"/>','<path d="M0 4h10" stroke="#fff" stroke-width="2"/>',
 '<path d="M1 4h9M3 9v6" stroke="#7f92b8" stroke-dasharray="2 2"/>','<path d="M2 10l6-7v10z" fill="#eee"/>','<path d="M2 12l6-9 2 9" stroke="#eee" fill="none" stroke-width="2"/>',
 '<path d="M2 1h8v14H2z" fill="none" stroke="#8fa7d4" stroke-dasharray="3 2"/>','<path d="M1 10l9-9M6 1h4" stroke="#eee" fill="none"/>','<path d="M2 1h8v14H2z" fill="none" stroke="#bbc" stroke-dasharray="3 2"/>','<path d="M1 12l9-9" stroke="#8fa7d4"/>',
 '<circle cx="8" cy="8" r="6" fill="#eee" stroke="#222"/>','<path d="M1 3l9 9M3 12l7-7" stroke="#ccc"/>','<path d="M2 15l5-12h3" stroke="#ddd" fill="none" stroke-width="1.500"/>',
 '<path d="M2 12l6-9v10z" fill="#ddd"/>','<path d="M2 1h8v13H2z" fill="#eee"/><path d="M6 1v13M2 7h8" stroke="#333"/>','<path d="M2 12l6-9v10z" fill="#ddd"/>'];
define('tool-strip', `:host{display:flex;flex-direction:column;width:14px;background:#5c5c5c;padding-left:4px}
.t{border:1px solid #353535;border-right:0;background:#595959;display:flex;flex-direction:column;gap:4px;padding:2px 0 4px 1px;overflow:hidden}`,
`<div class="t"><svg class="i" width="9" height="8"><path d="M2 2h7M2 4h7M2 6h7" stroke="#222" stroke-dasharray="1 2"/></svg>${clip.map(c => `<svg class="i" width="9" height="17" viewBox="0 0 9 17">${c}</svg>`).join('')}</div>`);

/* ---------- bottom bar ---------- */
define('layout-tabs', `:host{display:flex;color:#bbb;padding-left:7px;gap:3px;align-items:flex-start}
button{height:18px;background:#4e4e4e;clip-path:polygon(0 0,100% 0,calc(100% - 4px) 14px,calc(100% - 9px) 100%,9px 100%,4px 14px);padding:0 12px 1px}
button.on{background:linear-gradient(#6b6b6b,#8c8c8c);color:#fff;font-weight:700;padding:0 10px 1px}button.pl{padding:0 7px}`,
`<button class="on">Model</button><button>Layout1</button><button class="pl" aria-label="New layout">${ico('plus',10)}</button>`);
define('status-group', `:host{display:flex;align-items:center;justify-content:space-around;border:1px solid #858585;border-left-color:#6b6b6b;background:#545454;padding:0 3px 2px;flex:0 0 var(--w);margin-left:-1px;color:#eee;overflow:hidden}`, '<slot></slot>');
const sb = (w, html) => `<status-group style="--w:${w}px">${html}</status-group>`;
const sbtn = (n, l, w = 15) => `<button aria-label="${l}">${ico(n, w)}</button>`;
const ca = ico('caret', 7);
define('status-bar', `:host{display:flex;flex:none;height:26px;background:#393939;border-top:1px solid #555}.g{flex:1}.n{color:#bcbcbc;font-size:12px}.b{font-size:12px}status-group button{color:inherit}`,
`<layout-tabs></layout-tabs><span class="g"></span>` +
sb(213,'<span class="n">333242.6552, 2351678.4491, 0.0000</span>') + sb(50,'<button class="b">MODEL</button>') +
sb(68, sbtn('grid','Grid')+sbtn('dots','Snap')+ca) + sb(106, sbtn('ortho','Ortho')+sbtn('polar','Polar')+ca+sbtn('iso','Isometric')+ca) +
sb(66, sbtn('otrack','Tracking')+sbtn('osnap','Object snap')+ca) + sb(109, sbtn('anno1','Annotation visibility')+sbtn('anno2','Auto scale')+sbtn('anno3','Annotation scale')+'<button>1:1</button>'+ca) +
sb(67, sbtn('gear','Workspace',13)+ca+sbtn('cplus','Monitor')) + sb(77, sbtn('layers','Elevation')+'<span class="b">3.5000</span>') +
sb(27, sbtn('shapes','Isolate')) + sb(28, sbtn('perf','Performance',18)) + sb(54, sbtn('curve','Geometry',19)+sbtn('tray','Tray')) + sb(33, sbtn('clean','Clean screen')+ico('menu3',5,12)));

/* ---------- shell ---------- */
define('app-button', `:host{display:block;width:35px}button{width:35px;height:37px;background:linear-gradient(#aaa,#7e7e7e);border:1px solid #111;border-top:0;display:grid;grid-template:25px 11px/24px 9px;font:700 8px/10px "Open Sans",sans-serif;color:#111}`,
`<button aria-label="Application menu">${ico('logo',22,24)}${ico('caret',7)}<span>C3D</span></button>`);
define('cad-app', `:host{display:flex;flex-direction:column;height:100vh;border:1px solid #c41a1f;border-bottom:2px solid #f00202}
.h{display:flex;background:#6a6a6a}.h>div{flex:1;min-width:0}.m{flex:1;display:flex;min-height:0}`,
`<div class="h"><app-button></app-button><div><title-bar></title-bar><menu-bar></menu-bar></div></div><ribbon-tabs></ribbon-tabs><ribbon-bar></ribbon-bar><file-tabs></file-tabs>
<div class="m"><drawing-area></drawing-area><tool-strip></tool-strip></div><status-bar></status-bar>`);
</script>
</body>
</html>
